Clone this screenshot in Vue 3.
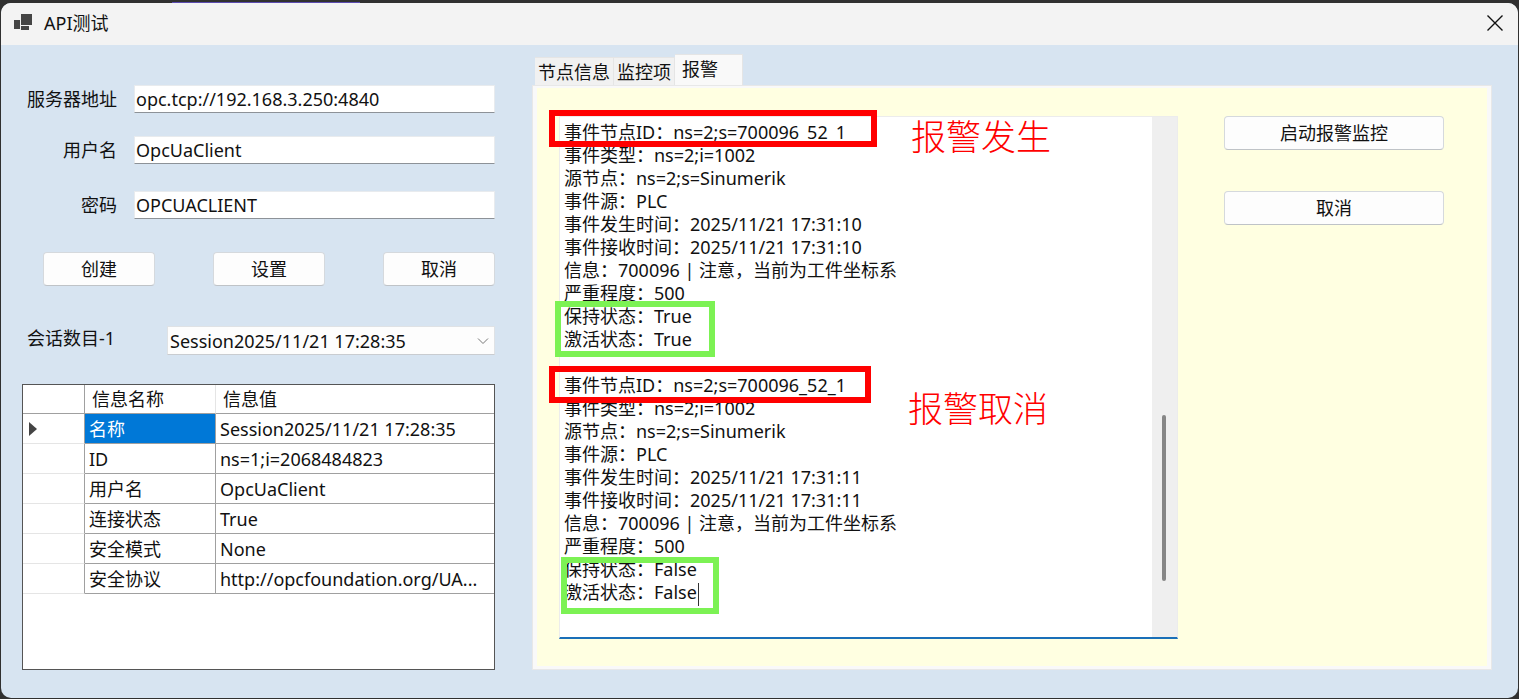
<template>
  <div class="desktop">
    <div class="window">
      <header class="titlebar">
        <svg class="titlebar__icon" viewBox="0 0 20 20" aria-hidden="true">
          <rect x="1" y="7" width="6" height="9" />
          <rect x="8" y="1" width="11" height="11" />
          <rect x="8" y="13" width="8" height="4" />
        </svg>
        <h1 class="titlebar__title">API测试</h1>
        <button class="titlebar__close" type="button" aria-label="关闭">
          <svg viewBox="0 0 16 16" aria-hidden="true">
            <path d="M0.5 0.5L15.5 15.5M15.5 0.5L0.5 15.5" />
          </svg>
        </button>
      </header>

      <main class="content">
        <section class="session">
          <div class="field">
            <label class="field__label" for="server">服务器地址</label>
            <input id="server" v-model="server" class="field__input" type="text" />
          </div>
          <div class="field">
            <label class="field__label" for="user">用户名</label>
            <input id="user" v-model="user" class="field__input" type="text" />
          </div>
          <div class="field field--last">
            <label class="field__label" for="password">密码</label>
            <input id="password" v-model="password" class="field__input" type="text" />
          </div>

          <div class="actions">
            <button class="btn" type="button">创建</button>
            <button class="btn" type="button">设置</button>
            <button class="btn" type="button">取消</button>
          </div>

          <div class="picker">
            <label class="picker__label" for="session">会话数目-1</label>
            <div class="picker__box">
              <select id="session" v-model="session" class="picker__select">
                <option>Session2025/11/21 17:28:35</option>
              </select>
              <svg class="picker__arrow" viewBox="0 0 12 8" aria-hidden="true">
                <path d="M1 1.5L6 6.5L11 1.5" />
              </svg>
            </div>
          </div>

          <div class="grid">
            <table class="grid__table">
              <thead>
                <tr>
                  <th class="grid__handle"></th>
                  <th class="grid__name">信息名称</th>
                  <th>信息值</th>
                </tr>
              </thead>
              <tbody>
                <tr v-for="(row, i) in rows" :key="row.name">
                  <td class="grid__handle">
                    <svg v-if="i === selected" viewBox="0 0 8 14" aria-hidden="true">
                      <path d="M0 0L8 7L0 14Z" />
                    </svg>
                  </td>
                  <td :class="{ 'grid__cell--selected': i === selected }" @click="selected = i">
                    {{ row.name }}
                  </td>
                  <td>{{ row.value }}</td>
                </tr>
              </tbody>
            </table>
          </div>
        </section>

        <section class="monitor">
          <div class="tabs" role="tablist">
            <button
              v-for="tab in tabs"
              :key="tab"
              class="tabs__item"
              :class="{ 'tabs__item--active': tab === activeTab }"
              type="button"
              role="tab"
              :aria-selected="tab === activeTab"
              @click="activeTab = tab"
            >
              {{ tab }}
            </button>
          </div>
          <div class="panel">
            <div class="log">
              <textarea v-model="log" class="log__text" aria-label="报警" spellcheck="false"></textarea>
              <div class="log__scroll"><div class="log__thumb"></div></div>
              <span class="log__caret"></span>
              <div class="mark mark--raised"></div>
              <div class="mark mark--raised-state"></div>
              <div class="mark mark--cleared"></div>
              <div class="mark mark--cleared-state"></div>
              <span class="note note--raised">报警发生</span>
              <span class="note note--cleared">报警取消</span>
            </div>
            <div class="panel__actions">
              <button class="btn btn--wide" type="button">启动报警监控</button>
              <button class="btn btn--wide" type="button">取消</button>
            </div>
          </div>
        </section>
      </main>
    </div>
  </div>
</template>

<script setup>
import { ref } from 'vue'

const server = ref('opc.tcp://192.168.3.250:4840')
const user = ref('OpcUaClient')
const password = ref('OPCUACLIENT')
const session = ref('Session2025/11/21 17:28:35')

const selected = ref(0)
const rows = [
  { name: '名称', value: 'Session2025/11/21 17:28:35' },
  { name: 'ID', value: 'ns=1;i=2068484823' },
  { name: '用户名', value: 'OpcUaClient' },
  { name: '连接状态', value: 'True' },
  { name: '安全模式', value: 'None' },
  { name: '安全协议', value: 'http://opcfoundation.org/UA...' },
]

const tabs = ['节点信息', '监控项', '报警']
const activeTab = ref('报警')

const events = [
  { time: '2025/11/21 17:31:10', state: 'True' },
  { time: '2025/11/21 17:31:11', state: 'False' },
]

function format(event) {
  return [
    '事件节点ID：ns=2;s=700096_52_1',
    '事件类型：ns=2;i=1002',
    '源节点：ns=2;s=Sinumerik',
    '事件源：PLC',
    `事件发生时间：${event.time}`,
    `事件接收时间：${event.time}`,
    '信息：700096 | 注意，当前为工件坐标系',
    '严重程度：500',
    `保持状态：${event.state}`,
    `激活状态：${event.state}`,
  ].join('\n')
}

const log = ref(events.map(format).join('\n\n'))
</script>

<style>
body {
  margin: 0;
  background: #262626;
}
</style>

<style scoped>
.desktop {
  box-sizing: border-box;
  min-height: 100vh;
  padding: 3px 1px 1px;
  display: flex;
  background: linear-gradient(90deg, transparent 172px, #5b4bb0 172px, #5b4bb0 360px, transparent 360px)
    0 2px / 100% 1px no-repeat #303030;
  font-family: 'Noto Sans', 'Noto Sans CJK SC', sans-serif;
  font-size: 18px;
  line-height: 24px;
  color: #111;
}
.desktop * {
  box-sizing: border-box;
}
button,
input,
select,
textarea {
  font: inherit;
  color: inherit;
  margin: 0;
}
.window {
  flex: 1;
  display: flex;
  flex-direction: column;
  border-radius: 10px;
  overflow: hidden;
  background: #d7e4f1;
}
.titlebar {
  display: flex;
  align-items: center;
  height: 42px;
  padding: 0 15px 2px 12px;
  background: #f3f3f3;
}
.titlebar__icon {
  width: 20px;
  height: 20px;
  fill: #454545;
}
.titlebar__title {
  flex: 1;
  margin: 0 0 0 11px;
  font-size: 18px;
  font-weight: 400;
}
.titlebar__close {
  display: flex;
  padding: 0;
  border: none;
  background: none;
}
.titlebar__close svg {
  width: 16px;
  height: 16px;
  fill: none;
  stroke: #111;
  stroke-width: 1.4;
}
.content {
  flex: 1;
  display: grid;
  grid-template-columns: 473fr 960fr;
  gap: 37px;
  padding: 0 26px 28px 21px;
}
.session {
  display: flex;
  flex-direction: column;
  padding-top: 40px;
  min-width: 0;
}
.field {
  display: flex;
  align-items: center;
  margin-bottom: 23px;
}
.field + .field {
  margin-bottom: 27px;
}
.field.field--last {
  margin-bottom: 33px;
}
.field__label {
  width: 95px;
  margin-right: 17px;
  text-align: right;
}
.field__input {
  flex: 1;
  min-width: 0;
  height: 28px;
  padding: 0 1px;
  border: 1px solid #e8ebee;
  border-bottom-color: #8d9298;
  background: #fff;
  outline: none;
}
.actions {
  display: flex;
  justify-content: space-between;
  padding-left: 21px;
  margin-bottom: 40px;
}
.btn {
  width: 112px;
  height: 34px;
  padding: 0;
  border: 1px solid #d5d9dd;
  border-bottom-color: #bfc3c7;
  border-radius: 4px;
  background: #fdfdfd;
}
.btn--wide {
  width: 100%;
}
.picker {
  display: flex;
  margin-bottom: 29px;
}
.picker__label {
  width: 140px;
  padding-left: 5px;
}
.picker__box {
  position: relative;
  flex: 1;
  margin-left: 5px;
}
.picker__select {
  display: block;
  width: 100%;
  height: 29px;
  padding: 0 2px;
  appearance: none;
  border: 1px solid #dfe2e5;
  border-bottom-color: #c9ccd0;
  border-radius: 0;
  background: #fdfdfd;
  outline: none;
}
.picker__arrow {
  position: absolute;
  right: 6px;
  top: 11px;
  width: 12px;
  height: 8px;
  fill: none;
  stroke: #777;
  pointer-events: none;
}
.grid {
  flex: 1;
  border: 1px solid #555;
  background: #fff;
}
.grid__table {
  width: 100%;
  table-layout: fixed;
  border-collapse: separate;
  border-spacing: 0;
}
.grid th,
.grid td {
  height: 30px;
  padding: 0 4px;
  border-right: 1px solid #a0a0a0;
  border-bottom: 1px solid #a0a0a0;
  font-weight: 400;
  text-align: left;
  white-space: nowrap;
}
.grid th {
  height: 29px;
  padding: 0 7px;
}
.grid th:last-child,
.grid td:last-child {
  border-right: none;
}
.grid th.grid__name {
  width: 131px;
  border-right-color: #e5e5e5;
}
.grid .grid__handle {
  width: 62px;
}
.grid td.grid__handle {
  padding: 0 6px;
  border-bottom-color: #e5e5e5;
}
.grid__handle svg {
  display: block;
  width: 8px;
  height: 14px;
  fill: #444;
}
.grid .grid__cell--selected {
  background: #0078d7;
  color: #fff;
}
.monitor {
  display: flex;
  flex-direction: column;
  padding-top: 9px;
  min-width: 0;
}
.tabs {
  display: flex;
  align-items: flex-end;
  padding-left: 3px;
}
.tabs__item {
  height: 28px;
  padding: 0 3px;
  border: 1px solid #e5e5e5;
  border-width: 1px 1px 0 0;
  background: #f1f1f1;
}
.tabs__item--active {
  height: 31px;
  padding: 0 24px 2px 7px;
  background: #f9f9f9;
}
.panel {
  flex: 1;
  display: grid;
  grid-template-columns: 1fr 220px;
  gap: 46px;
  padding: 28px 43px 27px 22px;
  border: solid #f9f9f9;
  border-width: 3px 5px 4px;
  outline: 1px solid #e8e8e8;
  outline-offset: -1px;
  background: #ffffe1;
}
.log {
  position: relative;
  display: flex;
  border: 1px solid #ececec;
  border-bottom: 2px solid #1a6fb8;
  background: #fff;
}
.log__text {
  flex: 1;
  min-width: 0;
  padding: 4px;
  border: none;
  background: none;
  line-height: 23px;
  resize: none;
  outline: none;
  overflow: hidden;
}
.log__scroll {
  width: 25px;
  padding-left: 10px;
  background: #efefef;
}
.log__thumb {
  width: 4px;
  height: 32%;
  margin-top: 298px;
  border-radius: 2px;
  background: #868686;
}
.log__caret {
  position: absolute;
  left: 138px;
  top: 466px;
  width: 1px;
  height: 23px;
  background: #333;
}
/* highlight frames drawn over the log */
.mark {
  position: absolute;
  border: 6px solid #f00;
  pointer-events: none;
}
.mark--raised {
  left: -11px;
  top: -7px;
  width: 328px;
  height: 37px;
}
.mark--cleared {
  left: -11px;
  top: 249px;
  width: 322px;
  height: 37px;
}
.mark--raised-state {
  left: -5px;
  top: 184px;
  width: 160px;
  height: 56px;
  border-color: #7cf254;
}
.mark--cleared-state {
  left: 1px;
  top: 440px;
  width: 158px;
  height: 57px;
  border-color: #7cf254;
}
.note {
  position: absolute;
  font-size: 35px;
  font-weight: 300;
  line-height: 40px;
  color: #f00;
}
.note--raised {
  left: 351px;
  top: 0;
}
.note--cleared {
  left: 348px;
  top: 272px;
}
.panel__actions {
  display: flex;
  flex-direction: column;
  gap: 41px;
}
</style>
